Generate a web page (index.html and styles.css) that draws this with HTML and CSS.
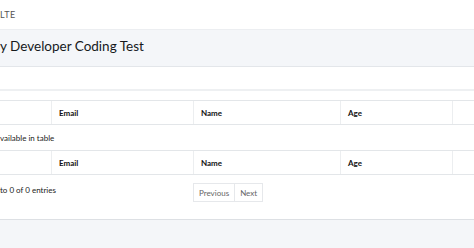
FILE: index.html
```html
<!DOCTYPE html>
<html lang="en">
<head>
  <meta charset="UTF-8" />
  <title>AdminLTE</title>
  <link rel="stylesheet" href="styles.css">
</head>
<body>
  <div class="brand">LTE</div>
  <div class="content-header">
    <h1>y Developer Coding Test</h1>
  </div>
  <div class="card">
    <div class="table">
      <div class="row head">
        <div class="cell"></div>
        <div class="cell">Email</div>
        <div class="cell">Name</div>
        <div class="cell">Age</div>
        <div class="cell"></div>
      </div>
      <div class="row empty">vailable in table</div>
      <div class="row head">
        <div class="cell"></div>
        <div class="cell">Email</div>
        <div class="cell">Name</div>
        <div class="cell">Age</div>
        <div class="cell"></div>
      </div>
    </div>
    <div class="table-info">
      <div class="info">to 0 of 0 entries</div>
      <div class="pagination">
        <button>Previous</button>
        <button>Next</button>
      </div>
    </div>
  </div>
  <div class="footer"></div>
</body>
</html>
```

FILE: styles.css
```css
* { margin: 0; padding: 0; box-sizing: border-box; }
body {
  font-family: 'Lato', 'Open Sans', sans-serif;
  background: #fff;
  color: #212529;
  height: 248px;
  overflow: hidden;
}
.brand {
  height: 29px;
  padding-top: 9px;
  font-size: 9px;
  color: #555;
  letter-spacing: 0.5px;
}
.content-header {
  height: 38px;
  background: #f4f6f9;
  border-top: 1px solid #eceef1;
  border-bottom: 1px solid #e3e6ea;
  display: flex;
  align-items: center;
  padding-bottom: 4px;
}
.content-header h1 {
  font-size: 13.5px;
  font-weight: 400;
  color: #16191c;
}
.card {
  margin-top: 22px;
  border-top: 2px solid #eef0f2;
  padding-top: 9px;
  height: 130px;
}
.row {
  display: grid;
  grid-template-columns: 51px 142px 147px 112px 1fr;
  height: 25px;
  font-size: 8px;
}
.head {
  border-top: 1px solid #e3e6e9;
  border-bottom: 1px solid #e3e6e9;
  font-weight: 700;
  color: #111;
}
.head .cell {
  display: flex;
  align-items: center;
  padding-left: 7px;
}
.head .cell + .cell {
  border-left: 1px solid #eceef0;
}
.empty {
  display: flex;
  align-items: center;
  color: #222;
}
.table-info {
  display: flex;
  align-items: flex-start;
  padding-top: 8px;
}
.info {
  width: 193px;
  font-size: 8px;
  color: #222;
  padding-top: 2px;
}
.pagination {
  display: flex;
}
.pagination button {
  font-family: inherit;
  font-size: 8px;
  color: #666;
  background: #fff;
  border: 1px solid #e6e8eb;
  height: 19px;
  padding: 0 5px;
}
.pagination button + button {
  border-left: none;
}
.footer {
  border-top: 1px solid #dde0e4;
  background: #f4f6f9;
  height: 30px;
}
```
